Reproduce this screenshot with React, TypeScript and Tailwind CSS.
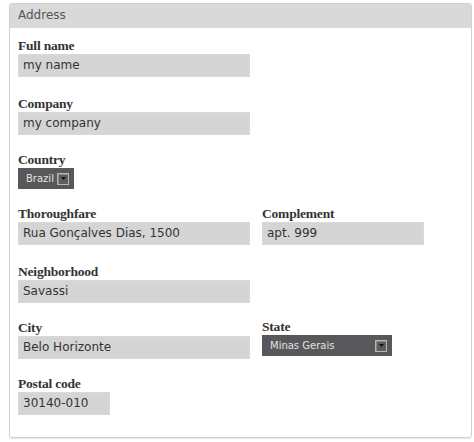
import React from "react";

const labelCls =
  "block h-[16px] leading-[16px] text-[13.5px] font-bold text-[#333] font-['Liberation_Serif',serif] tracking-[-0.2px]";
const inputCls =
  "h-[23px] bg-[#d5d5d5] border border-[#d9d9d9] pl-[4px] text-[12px] leading-[21px] text-[#333] font-['DejaVu_Sans',sans-serif]";

function Field({ label, value, w, className = "" }: { label: string; value: string; w: string; className?: string }) {
  return (
    <div className={className}>
      <div className={labelCls}>{label}</div>
      <div className={`${inputCls} ${w}`}>{value}</div>
    </div>
  );
}

function Arrow() {
  return (
    <div className="w-[12px] h-[12px] border border-[#b5b5b5] bg-[#5d5d5d] flex items-center justify-center shadow-[inset_1px_1px_0_#8a8a8a]">
      <svg width="5" height="3" viewBox="0 0 5 3">
        <path d="M0 0 H5 L2.5 3 Z" fill="#111" />
      </svg>
    </div>
  );
}

function Select({ label, value, w, className = "" }: { label: string; value: string; w: string; className?: string }) {
  return (
    <div className={className}>
      <div className={labelCls}>{label}</div>
      <div
        className={`h-[21px] bg-[#58585a] flex items-center justify-between pl-[8px] pr-[5px] text-[10px] text-[#e2e2e2] font-['DejaVu_Sans',sans-serif] ${w}`}
      >
        <span>{value}</span>
        <Arrow />
      </div>
    </div>
  );
}

export default function App() {
  return (
    <div className="bg-white w-[474px] h-[442px] pt-[3px] pl-[9px]">
      <div className="w-[463px] h-[435px] border border-[#d2d2d2] rounded-[3px] shadow-[0_1px_1px_#e6e6e6] overflow-hidden">
        <div className="h-[24px] bg-[#d9d9d9] pl-[8px] text-[12px] leading-[23px] text-[#555] font-['DejaVu_Sans',sans-serif]">
          Address
        </div>
        <div className="pl-[8px] pt-[10px]">
          <Field label="Full name" value="my name" w="w-[232px]" />
          <Field label="Company" value="my company" w="w-[232px]" className="mt-[19px]" />
          <Select label="Country" value="Brazil" w="w-[56px]" className="mt-[17px]" />
          <div className="flex gap-[12px] mt-[17px]">
            <Field label="Thoroughfare" value="Rua Gonçalves Dias, 1500" w="w-[232px]" />
            <Field label="Complement" value="apt. 999" w="w-[162px]" />
          </div>
          <Field label="Neighborhood" value="Savassi" w="w-[232px]" className="mt-[19px]" />
          <div className="flex gap-[12px] mt-[17px]">
            <Field label="City" value="Belo Horizonte" w="w-[232px]" />
            <Select label="State" value="Minas Gerais" w="w-[130px]" className="-mt-px" />
          </div>
          <Field label="Postal code" value="30140-010" w="w-[92px]" className="mt-[17px]" />
        </div>
      </div>
    </div>
  );
}
